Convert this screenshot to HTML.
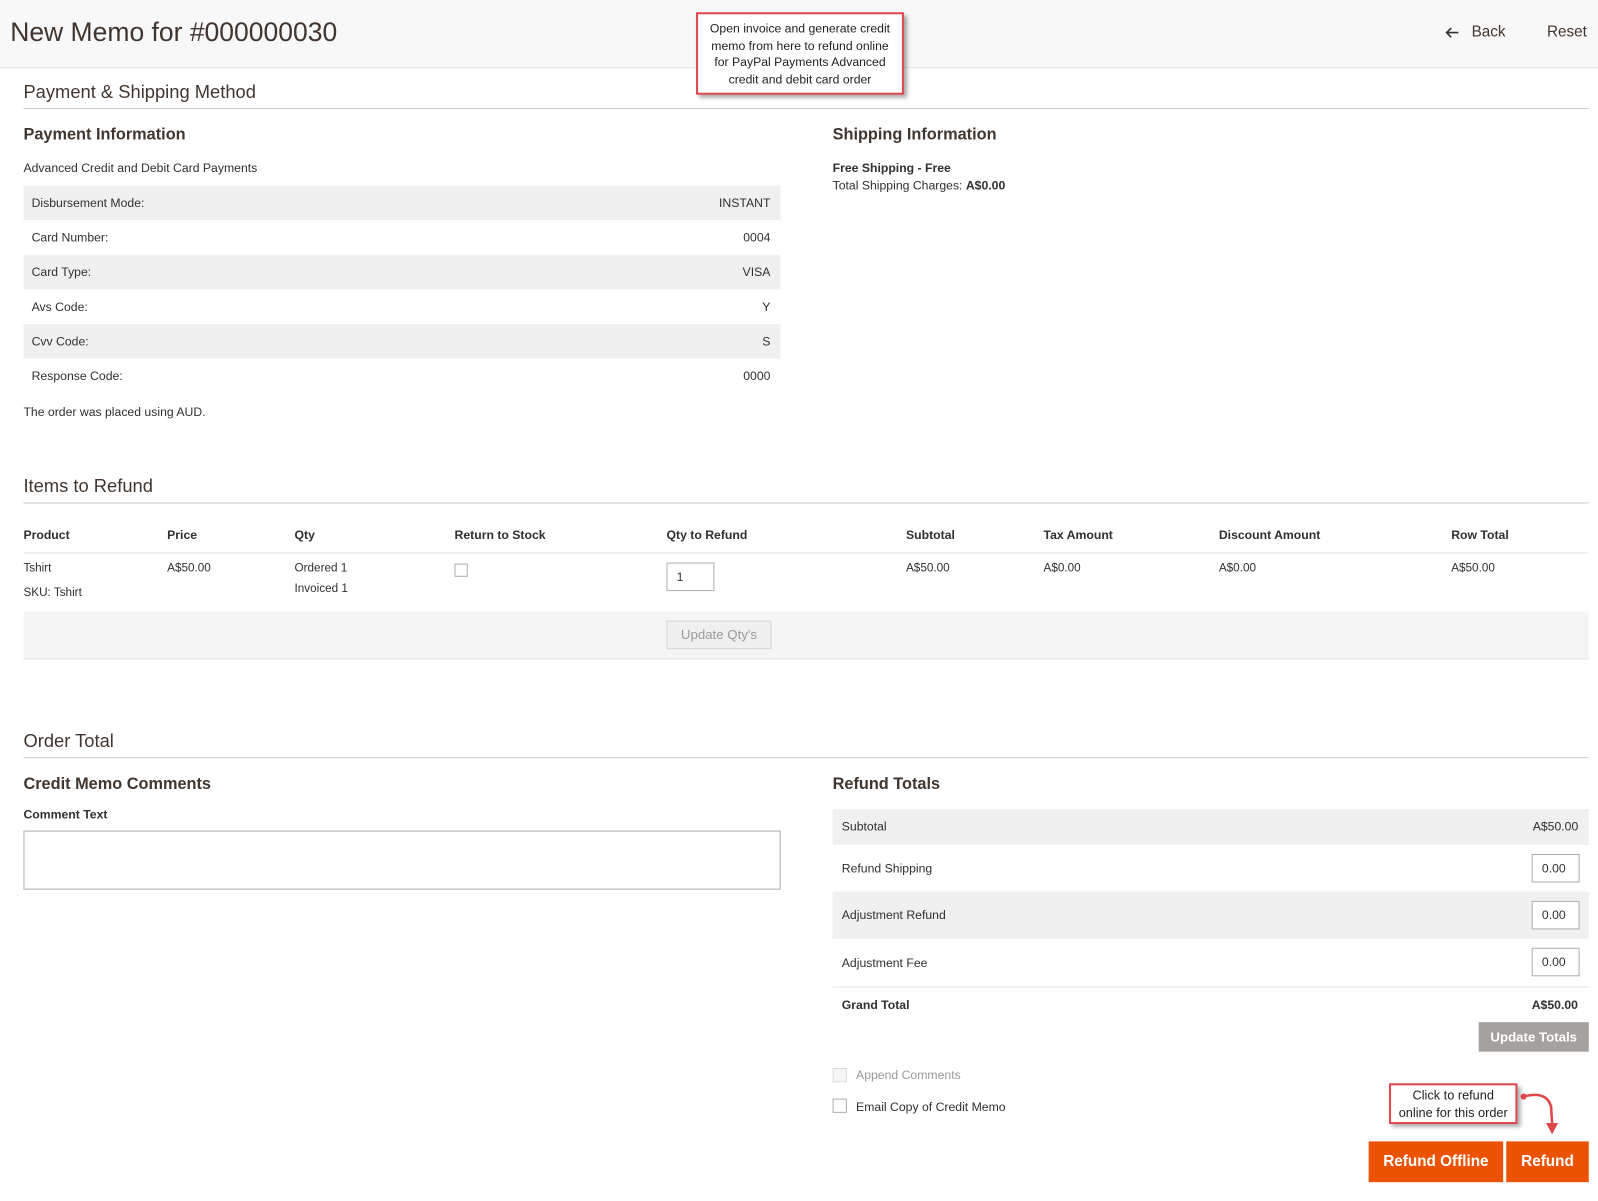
<!DOCTYPE html>
<html><head><meta charset="utf-8"><style>
*{box-sizing:border-box;margin:0;padding:0}
body{width:1598px;height:1200px;position:relative;background:#fff;font-family:"Liberation Sans",sans-serif;color:#303030;font-size:12px;overflow:hidden}
#w{position:absolute;left:0;top:0;width:1568px;height:1178px;transform:scale(1.0191);transform-origin:0 0}
.a{position:absolute;white-space:nowrap}
.hdr{position:absolute;left:0;top:0;width:1568px;height:67px;background:#f8f8f8;border-bottom:1px solid #e3e3e3}
.sec{position:absolute;font-size:18px;color:#41362f}
.line{position:absolute;height:1px;background:#cccccc}
.h3{position:absolute;font-size:16px;font-weight:bold;color:#41362f}
.row{position:absolute;left:23px;width:743px;height:34px;font-size:12px;color:#303030}
.row span{position:absolute;top:10px}
.g{background:#f0f0f0}
.th{position:absolute;top:518px;font-weight:bold;font-size:12px}
.td{position:absolute;font-size:11.5px}
.inp{position:absolute;border:1px solid #adadad;background:#fff;font-size:12px;padding-left:9px}
.cb{position:absolute;width:14px;height:14px;border:1px solid #adadad;background:#fff}
.tip{position:absolute;border:2px solid #e0474c;background:#fff;box-shadow:3px 3px 4px rgba(0,0,0,.35);text-align:center;font-size:12px;line-height:16.5px;color:#222}
.btn{position:absolute;background:#eb5202;color:#fff;font-weight:bold;font-size:15px;text-align:center;line-height:40px;height:40px}
</style></head><body><div id="w">
<div class="hdr"></div>
<div class="a" style="left:10px;top:16px;font-size:26px;color:#41362f">New Memo for #000000030</div>
<svg class="a" style="left:1418px;top:26px" width="14" height="12" viewBox="0 0 14 12"><path d="M13 6H2M6 1.5L1.5 6 6 10.5" stroke="#303030" stroke-width="1.6" fill="none"/></svg>
<div class="a" style="left:1444px;top:23px;font-size:15px;color:#41362f">Back</div>
<div class="a" style="left:1518px;top:23px;font-size:15px;color:#41362f">Reset</div>
<div class="tip" style="left:683px;top:12px;width:204px;height:81px;padding-top:6px">Open invoice and generate credit<br>memo from here to refund online<br>for PayPal Payments Advanced<br>credit and debit card order</div>

<div class="sec" style="left:23px;top:80px">Payment &amp; Shipping Method</div>
<div class="line" style="left:23px;top:106px;width:1536px"></div>
<div class="h3" style="left:23px;top:124px">Payment Information</div>
<div class="a" style="left:23px;top:158px">Advanced Credit and Debit Card Payments</div>
<div class="row g" style="top:182px"><span style="left:8px">Disbursement Mode:</span><span style="right:10px">INSTANT</span></div>
<div class="row" style="top:216px"><span style="left:8px">Card Number:</span><span style="right:10px">0004</span></div>
<div class="row g" style="top:250px"><span style="left:8px">Card Type:</span><span style="right:10px">VISA</span></div>
<div class="row" style="top:284px"><span style="left:8px">Avs Code:</span><span style="right:10px">Y</span></div>
<div class="row g" style="top:318px"><span style="left:8px">Cvv Code:</span><span style="right:10px">S</span></div>
<div class="row" style="top:352px"><span style="left:8px">Response Code:</span><span style="right:10px">0000</span></div>
<div class="a" style="left:23px;top:397px">The order was placed using AUD.</div>

<div class="h3" style="left:817px;top:124px">Shipping Information</div>
<div class="a" style="left:817px;top:158px;font-weight:bold">Free Shipping - Free</div>
<div class="a" style="left:817px;top:175px">Total Shipping Charges: <b>A$0.00</b></div>

<div class="sec" style="left:23px;top:467px">Items to Refund</div>
<div class="line" style="left:23px;top:493px;width:1536px"></div>
<div class="th" style="left:23px">Product</div>
<div class="th" style="left:164px">Price</div>
<div class="th" style="left:289px">Qty</div>
<div class="th" style="left:446px">Return to Stock</div>
<div class="th" style="left:654px">Qty to Refund</div>
<div class="th" style="left:889px">Subtotal</div>
<div class="th" style="left:1024px">Tax Amount</div>
<div class="th" style="left:1196px">Discount Amount</div>
<div class="th" style="left:1424px">Row Total</div>
<div class="line" style="left:23px;top:542px;width:1536px;background:#e3e3e3"></div>
<div class="td" style="left:23px;top:552px">Tshirt</div>
<div class="td" style="left:23px;top:576px">SKU: Tshirt</div>
<div class="td" style="left:164px;top:552px">A$50.00</div>
<div class="td" style="left:289px;top:552px">Ordered 1</div>
<div class="td" style="left:289px;top:572px">Invoiced 1</div>
<div class="cb" style="left:446px;top:553px;width:13px;height:13px"></div>
<div class="inp" style="left:654px;top:552px;width:47px;height:28px;line-height:26px">1</div>
<div class="td" style="left:889px;top:552px">A$50.00</div>
<div class="td" style="left:1024px;top:552px">A$0.00</div>
<div class="td" style="left:1196px;top:552px">A$0.00</div>
<div class="td" style="left:1424px;top:552px">A$50.00</div>
<div class="a" style="left:23px;top:600px;width:1536px;height:47px;background:#f5f5f5;border-bottom:1px solid #e3e3e3"></div>
<div class="a" style="left:654px;top:609px;width:103px;height:28px;border:1px solid #d6d6d6;background:#f0f0f0;color:#9a9a9a;font-size:13px;text-align:center;line-height:26px">Update Qty's</div>

<div class="sec" style="left:23px;top:717px">Order Total</div>
<div class="line" style="left:23px;top:743px;width:1536px"></div>
<div class="h3" style="left:23px;top:761px">Credit Memo Comments</div>
<div class="a" style="left:23px;top:792px;font-weight:bold">Comment Text</div>
<div class="a" style="left:23px;top:815px;width:743px;height:58px;border:1px solid #adadad"></div>

<div class="h3" style="left:817px;top:761px">Refund Totals</div>
<div class="a g" style="left:817px;top:794px;width:742px;height:35px"></div>
<div class="a" style="left:826px;top:804px">Subtotal</div>
<div class="a" style="left:1504px;top:804px">A$50.00</div>
<div class="a" style="left:826px;top:845px">Refund Shipping</div>
<div class="inp" style="left:1503px;top:838px;width:47px;height:28px;line-height:26px">0.00</div>
<div class="a g" style="left:817px;top:875px;width:742px;height:46px"></div>
<div class="a" style="left:826px;top:891px">Adjustment Refund</div>
<div class="inp" style="left:1503px;top:884px;width:47px;height:28px;line-height:26px">0.00</div>
<div class="a" style="left:826px;top:938px">Adjustment Fee</div>
<div class="inp" style="left:1503px;top:930px;width:47px;height:28px;line-height:26px">0.00</div>
<div class="line" style="left:817px;top:968px;width:742px;background:#e3e3e3"></div>
<div class="a" style="left:826px;top:979px;font-weight:bold">Grand Total</div>
<div class="a" style="left:1503px;top:979px;font-weight:bold">A$50.00</div>
<div class="a" style="left:1451px;top:1003px;width:108px;height:29px;background:#a5a19f;color:#fff;font-weight:bold;font-size:13px;text-align:center;line-height:29px">Update Totals</div>

<div class="cb" style="left:817px;top:1048px;background:#f5f5f5;border-color:#ddd"></div>
<div class="a" style="left:840px;top:1048px;color:#999">Append Comments</div>
<div class="cb" style="left:817px;top:1078px"></div>
<div class="a" style="left:840px;top:1079px">Email Copy of Credit Memo</div>

<div class="tip" style="left:1363px;top:1063px;width:126px;height:40px;padding-top:2px;font-size:12.5px">Click to refund<br>online for this order</div>
<svg class="a" style="left:1490px;top:1068px" width="45" height="48" viewBox="0 0 45 48"><circle cx="5" cy="8" r="3" fill="#e0474c"/><path d="M5 8 Q28 2 32 18 L33 34" stroke="#e0474c" stroke-width="2.5" fill="none"/><path d="M27 34 L39 34 L33 45 Z" fill="#e0474c"/></svg>
<div class="btn" style="left:1343px;top:1120px;width:132px">Refund Offline</div>
<div class="btn" style="left:1478px;top:1120px;width:81px">Refund</div>
</div></body></html>
